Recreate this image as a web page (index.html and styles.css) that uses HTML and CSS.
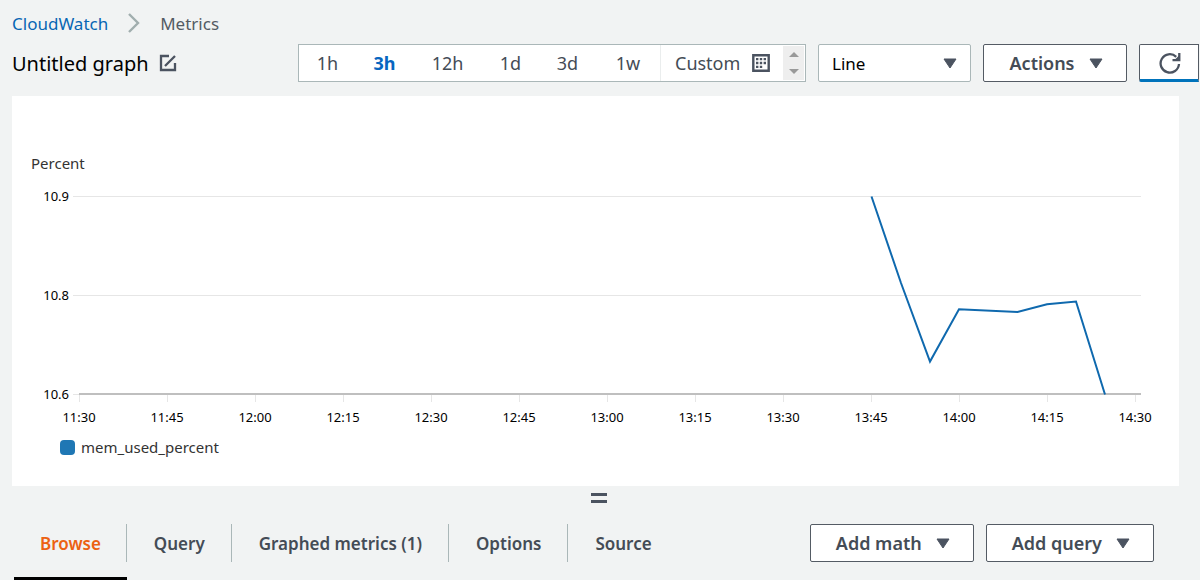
FILE: index.html
```html
<!DOCTYPE html>
<html lang="en">
<head>
<meta charset="utf-8">
<title>CloudWatch Metrics</title>
<link rel="stylesheet" href="styles.css">
</head>
<body>
<header class="header">
  <nav class="breadcrumb" aria-label="Breadcrumb">
    <a class="crumb-link" href="#">CloudWatch</a>
    <svg class="crumb-sep" width="12" height="20" viewBox="0 0 12 20" aria-hidden="true"><path d="M1 1l9 9-9 9" fill="none" stroke="#a1aeae" stroke-width="2.4"/></svg>
    <span class="crumb-current">Metrics</span>
  </nav>
  <div class="title-row">
    <div class="title">
      <h1 class="title-text">Untitled graph</h1>
      <button class="icon-button" aria-label="Edit title">
        <svg width="18" height="18" viewBox="0 0 18 18" aria-hidden="true"><path d="M10 2H2v14h14V9M6 12L16 2" fill="none" stroke="#4b5360" stroke-width="2.3"/></svg>
      </button>
    </div>
    <div class="toolbar">
      <div class="ranges">
        <button class="range">1h</button>
        <button class="range range-active">3h</button>
        <button class="range range-wide">12h</button>
        <button class="range">1d</button>
        <button class="range">3d</button>
        <button class="range range-week">1w</button>
        <button class="range-custom">Custom
          <svg width="18" height="18" viewBox="0 0 18 18" aria-hidden="true"><path d="M1.300 1.300h15.400v15.400H1.300z" fill="none" stroke="#4b5360" stroke-width="2.4"/><path d="M4 5.200h10M4 9h10M4 12.800h6.400" fill="none" stroke="#4b5360" stroke-width="2.3" stroke-dasharray="2.400 1.400"/></svg>
        </button>
        <span class="stepper">
          <button class="step" aria-label="Previous"><svg width="10" height="5" viewBox="0 0 10 5"><path d="M0 5l5-5 5 5z" fill="#999"/></svg></button>
          <button class="step" aria-label="Next"><svg width="10" height="5" viewBox="0 0 10 5"><path d="M0 0l5 5 5-5z" fill="#999"/></svg></button>
        </span>
      </div>
      <div class="select-wrap">
        <select class="select" aria-label="Graph type"><option>Line</option></select>
        <svg class="select-caret" width="14" height="11" viewBox="0 0 14 11" aria-hidden="true"><path d="M1 1h12L7 10z" fill="#4b5360" stroke="#4b5360" stroke-linejoin="round"/></svg>
      </div>
      <button class="button button-actions">Actions
        <svg width="14" height="11" viewBox="0 0 14 11" aria-hidden="true"><path d="M1 1h12L7 10z" fill="#4b5360" stroke="#4b5360" stroke-linejoin="round"/></svg>
      </button>
      <button class="button button-refresh" aria-label="Refresh">
        <svg width="22" height="22" viewBox="0 0 22 22" aria-hidden="true"><path d="M20 12a9.200 9.200 0 1 1-2.800-7.200M20.300 1v7.200H13.500" fill="none" stroke="#4b5360" stroke-width="2.3"/><path d="M20.500 3v5h-5z" fill="#4b5360"/></svg>
      </button>
    </div>
  </div>
</header>

<main class="panel">
  <p class="unit">Percent</p>
  <div class="plot">
    <svg class="plot-lines" viewBox="0 0 1144 200" preserveAspectRatio="none" role="img" aria-label="mem_used_percent over time">
      <path class="grid-line" d="M38 1.500H1106M38 100.500H1106M38 199.500H44"/>
      <path class="axis-line" d="M44 199H1106"/>
      <path class="series" d="M836.500 1.500L866 88 895 166.500 924 114.300 982.500 117 1012 109.300 1041 106.500 1070 199.500"/>
    </svg>
    <div class="y-labels"><span>10.9</span><span>10.8</span><span>10.6</span></div>
  </div>
  <div class="x-labels">
    <span>11:30</span><span>11:45</span><span>12:00</span><span>12:15</span><span>12:30</span><span>12:45</span><span>13:00</span><span>13:15</span><span>13:30</span><span>13:45</span><span>14:00</span><span>14:15</span><span>14:30</span>
  </div>
  <div class="legend"><span class="swatch"></span>mem_used_percent</div>
</main>

<div class="handle"><span class="grip"></span></div>

<footer class="bottom">
  <nav class="tabs" aria-label="Graph settings">
    <button class="tab tab-active"><span class="tab-label">Browse</span></button>
    <button class="tab"><span class="tab-label">Query</span></button>
    <button class="tab"><span class="tab-label">Graphed metrics (1)</span></button>
    <button class="tab"><span class="tab-label">Options</span></button>
    <button class="tab"><span class="tab-label">Source</span></button>
  </nav>
  <div class="actions">
    <button class="button">Add math
      <svg width="14" height="11" viewBox="0 0 14 11" aria-hidden="true"><path d="M1 1h12L7 10z" fill="#4b5360" stroke="#4b5360" stroke-linejoin="round"/></svg>
    </button>
    <button class="button">Add query
      <svg width="14" height="11" viewBox="0 0 14 11" aria-hidden="true"><path d="M1 1h12L7 10z" fill="#4b5360" stroke="#4b5360" stroke-linejoin="round"/></svg>
    </button>
  </div>
</footer>
</body>
</html>
```
FILE: styles.css
```css
* { box-sizing: border-box; }
body {
  margin: 0;
  background: #f1f3f3;
  color: #16191f;
  font-family: "Noto Sans", "Open Sans", sans-serif;
  font-size: 18px;
  overflow-x: hidden;
}
button, select { font: inherit; color: inherit; margin: 0; }
button { background: none; border: 0; padding: 0; white-space: nowrap; }
svg { display: block; flex: none; }

.header { padding: 11px 0 14px 12px; }
.breadcrumb { display: flex; align-items: center; gap: 20px; height: 24px; font-size: 17px; }
.crumb-link { color: #0766b3; text-decoration: none; }
.crumb-current { color: #545b64; }
.title-row { display: flex; align-items: center; justify-content: space-between; gap: 12px; margin-top: 9px; padding-right: 1px; }
.title { display: flex; align-items: center; gap: 10px; }
.title-text { margin: 0; font-size: 20px; font-weight: 400; white-space: nowrap; color: #000; }
.toolbar { display: flex; gap: 12px; flex: none; }
.ranges { display: flex; height: 38px; border: 1px solid #aab7b8; background: #fff; color: #444c56; }
.range { width: 57px; }
.range-wide { width: 69px; }
.range-week { width: 64px; }
.range-active { color: #0766c0; font-weight: 700; }
.range-custom { display: flex; align-items: center; justify-content: space-between; width: 123px; padding: 0 13px 0 14px; border-left: 1px solid #eaeded; }
.stepper { display: flex; flex-direction: column; width: 22px; background: #eee; border: solid #fff; border-width: 1px 1px 1px 0; }
.step { flex: 1; display: flex; align-items: center; justify-content: center; }
.select-wrap { position: relative; }
.select { appearance: none; width: 153px; height: 38px; padding: 0 13px; border: 1px solid #aab7b8; border-radius: 2px; background: #fff; color: #000; font-size: 17px; }
.select-caret { position: absolute; right: 14px; top: 14px; pointer-events: none; }
.button { display: flex; align-items: center; justify-content: center; gap: 14px; height: 38px; padding: 0 23px 0 25px; border: 1px solid #545b64; border-radius: 2px; background: #fff; color: #444c56; font-weight: 600; font-size: 18px; }
.button-actions { width: 144px; }
.button-refresh { width: 60px; padding: 2px 0 0 1px; border-bottom: 3px solid #0073bb; border-radius: 2px 0 0 2px; }

.panel { margin: 0 21px 0 12px; padding: 55px 0 27px; background: #fff; }
.unit { margin: 0 0 20px 19px; font-size: 15px; line-height: 24px; color: #333; }
.plot { display: grid; margin-left: 23px; }
.plot-lines { grid-area: 1 / 1; width: 100%; height: 200px; }
.plot-lines path { fill: none; vector-effect: non-scaling-stroke; }
.plot-lines .grid-line { stroke: #e6e6e6; }
.plot-lines .axis-line { stroke: #bfbfbf; stroke-width: 2px; }
.plot-lines .series { stroke: #0f69ae; stroke-width: 2px; }
.y-labels { grid-area: 1 / 1; display: flex; flex-direction: column; justify-content: space-between; width: 34px; margin: -7px 0; text-align: right; font-size: 13px; line-height: 16px; color: #000; }
.x-labels { display: grid; grid-template-columns: repeat(13, 1fr); margin-left: 23px; text-align: center; font-size: 13px; line-height: 16px; color: #000; }
.x-labels span::before { content: ""; display: block; width: 1px; height: 7px; margin: 0 auto 7px; background: #e6e6e6; }
.legend { display: flex; align-items: center; gap: 6px; margin: 10px 0 0 48px; font-size: 15px; line-height: 24px; color: #333; }
.swatch { width: 15px; height: 15px; border-radius: 4px; background: #1f77b4; }

.handle { display: flex; justify-content: center; padding: 7px 2px 0 0; }
.grip { width: 16px; height: 10px; border: solid #4b5360; border-width: 3px 0; }
.bottom { display: flex; justify-content: space-between; align-items: flex-start; padding: 21px 46px 0 14px; }
.tabs { display: flex; }
.tab { display: flex; height: 56px; padding-bottom: 18px; color: #444c56; font-size: 17px; font-weight: 600; }
.tab-label { display: flex; align-items: center; height: 38px; padding: 0 26px 0 27px; border-right: 1px solid #aab7b8; }
.tab:last-child .tab-label { border-right: 0; }
.tab-active { border-bottom: 3px solid #000; color: #ec6112; }
.tab-active .tab-label { padding: 0 25px 0 26px; }
.actions { display: flex; gap: 12px; }
```
